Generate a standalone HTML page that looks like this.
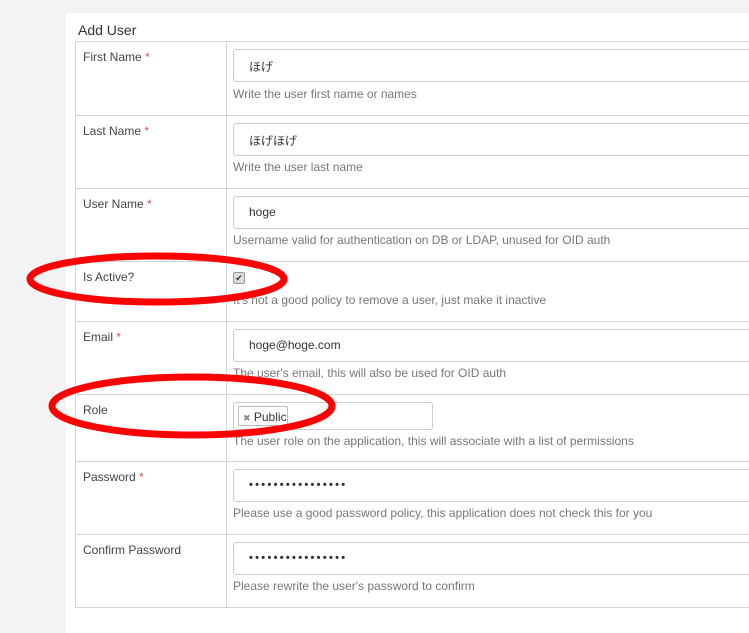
<!DOCTYPE html>
<html><head><meta charset="utf-8"><style>
*{box-sizing:border-box;margin:0;padding:0}
body{width:749px;height:621px;overflow:hidden;background:#f3f3f3;font-family:"Liberation Sans","Noto Sans CJK JP",sans-serif;position:relative}
.panel{position:absolute;left:66px;top:13px;width:700px;height:620px;background:#fff}
.title{position:absolute;left:78px;top:22px;font-size:14px;color:#333}
.row{position:absolute;left:75px;width:700px;border:1px solid #cfd6dc;border-bottom:none}
.lab{position:absolute;left:7px;top:8px;font-size:12px;color:#444}
.lab b{color:#d9534f;font-weight:normal}
.div{position:absolute;left:150px;top:0;bottom:0;border-left:1px solid #cfd6dc}
.inp{position:absolute;left:157px;top:7px;width:600px;height:33px;border:1px solid #ccc;border-radius:3px;font-size:12px;color:#333;padding:8px 0 0 15px}
.help{position:absolute;left:157px;font-size:12px;color:#777}
.pw{letter-spacing:2.3px;font-size:11px;padding-top:9px;font-weight:bold}
</style></head><body>
<div class="panel"></div>
<div class="title">Add User</div>
<div class="row" style="top:41px;height:74px"><div class="div"></div><div class="lab">First Name <b>*</b></div><div class="inp">ほげ</div><div class="help" style="top:45px">Write the user first name or names</div></div>
<div class="row" style="top:115px;height:73px"><div class="div"></div><div class="lab">Last Name <b>*</b></div><div class="inp">ほげほげ</div><div class="help" style="top:44px">Write the user last name</div></div>
<div class="row" style="top:188px;height:73px"><div class="div"></div><div class="lab">User Name <b>*</b></div><div class="inp">hoge</div><div class="help" style="top:44px">Username valid for authentication on DB or LDAP, unused for OID auth</div></div>
<div class="row" style="top:261px;height:60px"><div class="div"></div><div class="lab">Is Active?</div>
<div style="position:absolute;left:157px;top:10px;width:12px;height:12px;border:1px solid #999;border-radius:2px;background:#ddd;font-size:9px;line-height:10px;text-align:center;color:#333">✔</div>
<div class="help" style="top:31px">It's not a good policy to remove a user, just make it inactive</div></div>
<div class="row" style="top:321px;height:73px"><div class="div"></div><div class="lab">Email <b>*</b></div><div class="inp">hoge@hoge.com</div><div class="help" style="top:44px">The user's email, this will also be used for OID auth</div></div>
<div class="row" style="top:394px;height:67px"><div class="div"></div><div class="lab">Role</div>
<div style="position:absolute;left:157px;top:7px;width:200px;height:28px;border:1px solid #ccc;border-radius:3px"><div style="position:absolute;left:4px;top:3px;width:50px;height:20px;border:1px solid #bbb;border-radius:2px;font-size:12px;color:#333;padding:3px 0 0 4px"><span style="color:#888;font-size:9px">✖</span> Public</div></div>
<div class="help" style="top:39px">The user role on the application, this will associate with a list of permissions</div></div>
<div class="row" style="top:461px;height:73px"><div class="div"></div><div class="lab">Password <b>*</b></div><div class="inp pw">••••••••••••••••</div><div class="help" style="top:44px">Please use a good password policy, this application does not check this for you</div></div>
<div class="row" style="top:534px;height:74px;border-bottom:1px solid #cfd6dc"><div class="div"></div><div class="lab">Confirm Password</div><div class="inp pw">••••••••••••••••</div><div class="help" style="top:44px">Please rewrite the user's password to confirm</div></div>
<svg width="749" height="621" style="position:absolute;left:0;top:0">
<ellipse cx="157" cy="279" rx="127" ry="23" fill="none" stroke="#f00" stroke-width="7"/>
<ellipse cx="192" cy="406" rx="140" ry="29" fill="none" stroke="#f00" stroke-width="7"/>
</svg>
</body></html>
